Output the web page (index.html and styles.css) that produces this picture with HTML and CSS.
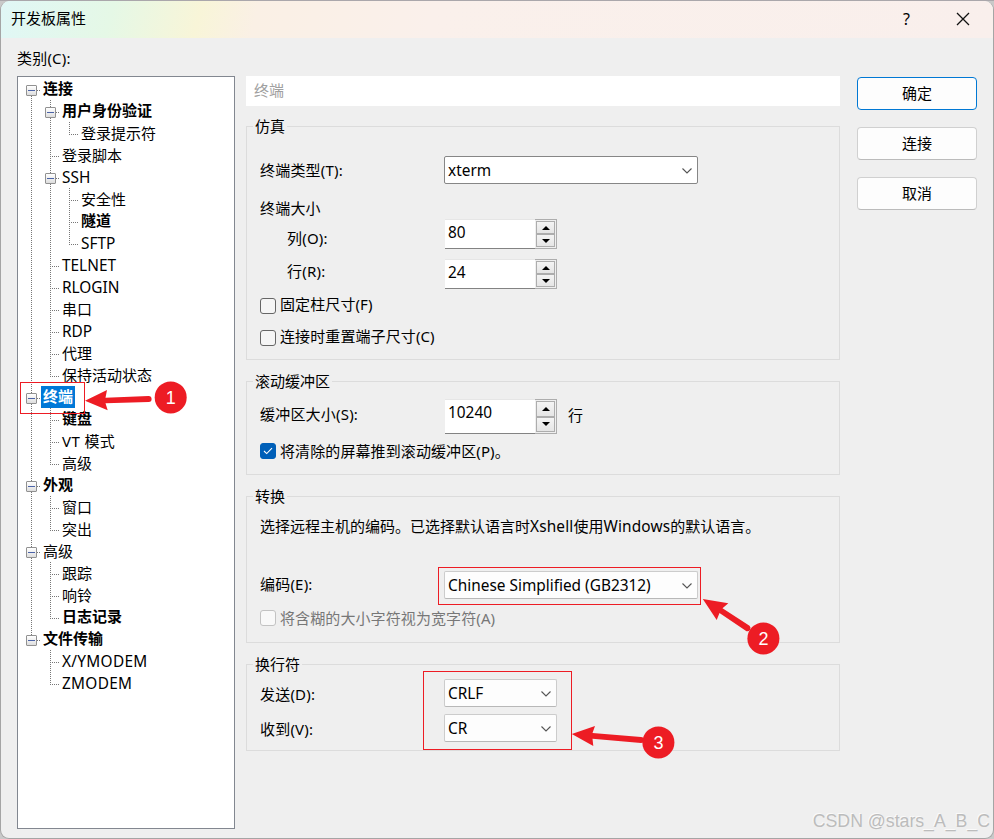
FILE: index.html
```
<!DOCTYPE html>
<html lang="zh-CN">
<head>
<meta charset="utf-8">
<title>开发板属性</title>
<link rel="stylesheet" href="styles.css">
</head>
<body>
<div class="window">
  <header class="titlebar">
    <h1>开发板属性</h1>
    <span class="help">?</span>
    <svg class="close" width="14" height="14" viewBox="0 0 14 14"><path d="M1 1L13 13M13 1L1 13"/></svg>
  </header>
  <div class="category">类别(C):</div>
  <div class="content">
    <nav class="tree">
      <ul>
        <li><i class="box"></i><b>连接</b>
          <ul>
            <li><i class="box"></i><b>用户身份验证</b>
              <ul><li><span>登录提示符</span></li></ul>
            </li>
            <li><span>登录脚本</span></li>
            <li><i class="box"></i><span class="lat">SSH</span>
              <ul>
                <li><span>安全性</span></li>
                <li><b>隧道</b></li>
                <li><span class="lat">SFTP</span></li>
              </ul>
            </li>
            <li><span class="lat">TELNET</span></li>
            <li><span class="lat">RLOGIN</span></li>
            <li><span>串口</span></li>
            <li><span class="lat">RDP</span></li>
            <li><span>代理</span></li>
            <li><span>保持活动状态</span></li>
          </ul>
        </li>
        <li><i class="box"></i><b class="selected">终端</b>
          <ul>
            <li><b>键盘</b></li>
            <li><span class="mixed">VT 模式</span></li>
            <li><span>高级</span></li>
          </ul>
        </li>
        <li><i class="box"></i><b>外观</b>
          <ul>
            <li><span>窗口</span></li>
            <li><span>突出</span></li>
          </ul>
        </li>
        <li><i class="box"></i><span>高级</span>
          <ul>
            <li><span>跟踪</span></li>
            <li><span>响铃</span></li>
            <li><b>日志记录</b></li>
          </ul>
        </li>
        <li><i class="box"></i><b>文件传输</b>
          <ul>
            <li><span class="lat modem">X/YMODEM</span></li>
            <li><span class="lat modem">ZMODEM</span></li>
          </ul>
        </li>
      </ul>
    </nav>

    <main class="panel">
      <div class="heading">终端</div>

      <section class="group emulation">
        <h2>仿真</h2>
        <div class="row type"><label>终端类型(T):</label>
          <div class="select strong wide"><span class="lat">xterm</span><svg class="chev" width="10" height="6" viewBox="0 0 10 6"><path d="M.5 .5L5 5L9.5 .5"/></svg></div></div>
        <div class="row size"><label>终端大小</label></div>
        <div class="row cols"><label class="indent">列(O):</label>
          <div class="spin"><span>80</span><div class="arrows"><i class="up"></i><i class="down"></i></div></div></div>
        <div class="row lines"><label class="indent">行(R):</label>
          <div class="spin"><span>24</span><div class="arrows"><i class="up"></i><i class="down"></i></div></div></div>
        <div class="check fixed"><i></i><span>固定柱尺寸(F)</span></div>
        <div class="check reset"><i></i><span>连接时重置端子尺寸(C)</span></div>
      </section>

      <section class="group buffer">
        <h2>滚动缓冲区</h2>
        <div class="row depth"><label>缓冲区大小(S):</label>
          <div class="spin tall"><span>10240</span><div class="arrows"><i class="up"></i><i class="down"></i></div></div><span class="unit">行</span></div>
        <div class="check on push"><i><svg width="10" height="8" viewBox="0 0 10 8"><path d="M1 4L3.7 6.6L9 1.2"/></svg></i><span>将清除的屏幕推到滚动缓冲区(P)。</span></div>
      </section>

      <section class="group convert">
        <h2>转换</h2>
        <p>选择远程主机的编码。已选择默认语言时<span class="lat wider">Xshell</span>使用<span class="lat wider">Windows</span>的默认语言。</p>
        <div class="row encoding"><label>编码(E):</label>
          <div class="select wide"><span class="lat">Chinese Simplified (GB2312)</span><svg class="chev" width="10" height="6" viewBox="0 0 10 6"><path d="M.5 .5L5 5L9.5 .5"/></svg></div></div>
        <div class="check off"><i></i><span>将含糊的大小字符视为宽字符(A)</span></div>
      </section>

      <section class="group newline">
        <h2>换行符</h2>
        <div class="row send"><label>发送(D):</label>
          <div class="select"><span class="lat">CRLF</span><svg class="chev" width="10" height="6" viewBox="0 0 10 6"><path d="M.5 .5L5 5L9.5 .5"/></svg></div></div>
        <div class="row receive"><label>收到(V):</label>
          <div class="select"><span class="lat">CR</span><svg class="chev" width="10" height="6" viewBox="0 0 10 6"><path d="M.5 .5L5 5L9.5 .5"/></svg></div></div>
      </section>
    </main>

    <aside class="actions">
      <button class="primary">确定</button>
      <button>连接</button>
      <button>取消</button>
    </aside>
  </div>
</div>

<svg class="notes" width="994" height="839" viewBox="0 0 994 839">
  <g class="frames">
    <rect x="20.5" y="382.5" width="64" height="31"/>
    <rect x="438.5" y="567.5" width="262" height="37"/>
    <rect x="423.5" y="671.5" width="148" height="78"/>
  </g>
  <g class="heads">
    <path d="M85 400.8L107 390L105.5 397.7L148.5 396A3 3 0 0 1 148.700 402L105.500 403.300L107.700 410.300Z"/>
    <path d="M702.800 599L728.300 603.300L722.500 608.300L749.500 625.800A3.200 3.200 0 0 1 746.500 631.200L719.500 613L716.700 620Z"/>
    <path d="M571.800 734L595 726L592.500 733L641 737A3 3 0 0 1 641 743L592.500 738.800L593.300 746Z"/>
    <circle cx="170.700" cy="397.400" r="16"/>
    <circle cx="763.400" cy="638.400" r="16"/>
    <circle cx="658.400" cy="742.400" r="16"/>
  </g>
  <g class="nums">
    <text x="170.700" y="404">1</text>
    <text x="763.400" y="645">2</text>
    <text x="658.400" y="749">3</text>
  </g>
</svg>
<div class="watermark">CSDN @stars_A_B_C</div>
</body>
</html>
```
FILE: styles.css
```
* { box-sizing: border-box; }

body {
  margin: 0;
  width: 994px;
  height: 839px;
  overflow: hidden;
  background: linear-gradient(#aaa7ab, #aaa7ab 1px, #c9c9c9 1px);
  color: #000;
  font: 15px/22px "Noto Sans", "Noto Sans CJK SC", sans-serif;
}

ul, h1, h2, p { margin: 0; padding: 0; list-style: none; font-size: 15px; font-weight: 400; }

.window {
  height: 838px;
  margin-top: 1px;
  overflow: hidden;
  background: #efefef;
  border: 1px solid #a5a5a5;
  border-top: 0;
  border-radius: 9px;
}

.titlebar {
  display: flex;
  align-items: center;
  height: 37px;
  padding: 0 23px 2px 10px;
  background: linear-gradient(105deg, #e0f7f6 0, #e5f8e6 110px, #f8f5d8 195px, #faf0e5 250px, #faf0eb 420px, #f9efec);
}
.titlebar h1 { flex: 1; line-height: 32px; padding-bottom: 2px; }
.help { margin-right: 46px; font-size: 16px; }
.close { stroke: #111; stroke-width: 1.3; fill: none; }

.category { height: 38px; padding: 9px 0 0 16px; letter-spacing: .2px; }

.content { display: flex; align-items: flex-start; padding-left: 16px; }

.lat { font-size: 15.4px; }
.wider { letter-spacing: .15px; }

.tree {
  width: 218px;
  height: 753px;
  padding: 1px 0 0 6px;
  background: #fff;
  border: 1px solid #828790;
}
.tree li { position: relative; padding-left: 19px; }
.tree li::before {
  content: "";
  position: absolute;
  left: 7px;
  top: 0;
  bottom: 0;
  width: 1px;
  background: repeating-linear-gradient(#777 0 1px, #fff 1px 2px);
}
.tree > ul > li:first-child::before { top: 12px; }
.tree li:last-child::before { bottom: auto; height: 13px; }
.tree li::after {
  content: "";
  position: absolute;
  left: 7px;
  top: 12px;
  width: 10px;
  height: 1px;
  background: repeating-linear-gradient(90deg, #777 0 1px, #fff 1px 2px);
}
.tree span, .tree b { display: block; width: max-content; height: 22px; line-height: 22px; white-space: nowrap; }
.tree b { line-height: 21px; }
.tree .lat { line-height: 24px; }
.tree .mixed { letter-spacing: .4px; }
.tree .modem { letter-spacing: .3px; }
.tree .selected { margin-left: -2px; padding: 0 2px; background: #0078d7; color: #fff; }
.box {
  position: absolute;
  z-index: 1;
  left: 2px;
  top: 7px;
  width: 11px;
  height: 11px;
  border: 1px solid #919191;
  border-radius: 1px;
  background: linear-gradient(#4b63a7, #4b63a7) 1px 4px / 7px 1px no-repeat, linear-gradient(#fff, #dedede);
}

.panel { width: 594px; margin-left: 11px; }
.heading { height: 30px; padding: 3px 8px; background: #fff; color: #a0a0a0; }

.group { padding-left: 13px; border: 1px solid #dcdcdc; }
.group h2 { width: max-content; height: 22px; margin: -11px 0 0 -7px; padding: 0 2px; line-height: 20px; background: #efefef; }
.emulation { height: 234px; margin-top: 20px; }
.buffer { height: 94px; margin-top: 21px; }
.convert { height: 147px; margin-top: 21px; }
.newline { height: 87px; margin-top: 21px; }

.row { display: flex; align-items: center; }
.row label { width: 184px; letter-spacing: .2px; }
.row .indent { padding-left: 27px; }
.type { margin-top: 18px; }
.size { height: 20px; margin-top: 14px; }
.cols { margin-top: 1px; }
.cols label { padding-top: 8px; }
.lines { margin-top: 10px; }
.lines label { padding-bottom: 6px; }
.fixed { margin-top: 7px; }
.reset { margin-top: 12px; }
.depth { margin-top: 6px; }
.depth label { padding-bottom: 5px; }
.push { margin-top: 7px; }
.convert p { height: 20px; margin-top: 9px; line-height: 18px; }
.encoding { margin-top: 34px; }
.encoding label { padding-bottom: 2px; }
.off { margin-top: 9px; color: #777; }
.send { margin-top: 3px; }
.receive { margin-top: 7px; }
.newline label { padding-top: 2px; }

.select {
  display: flex;
  align-items: center;
  justify-content: space-between;
  width: 113px;
  height: 28px;
  padding: 0 5px 1px 3px;
  background: #fdfdfd;
  border: 1px solid #ccc;
  border-bottom-color: #b8b8b8;
  border-radius: 2px;
}
.select .lat { padding-top: 2px; }
.wide { width: 254px; }
.strong { background: #fff; border-color: #868686; }
.chev { fill: none; stroke: #555; stroke-width: 1.1; transform: translateY(1px); }

.spin { display: flex; width: 112px; height: 30px; margin-left: 1px; }
.spin span { flex: 1; padding-left: 3px; font-size: 15.4px; line-height: 26px; background: #fff; border-top: 1px solid #e6e6e6; border-bottom: 1px solid #838383; }
.tall { height: 35px; }
.arrows {
  display: flex;
  flex-direction: column;
  width: 22px;
  padding: 1px;
  border: 1px solid #adadad;
  border-left-width: 0;
}
.arrows i { display: grid; place-items: center; flex: 1; border: 1px solid #adadad; background: linear-gradient(#f4f4f4, #e5e5e5); }
.arrows i::before { content: ""; border: 4px solid transparent; }
.arrows .up::before { border-top: 0; border-bottom-color: #000; }
.arrows .down::before { border-bottom: 0; border-top-color: #000; }
.unit { margin-left: 11px; padding-bottom: 3px; }

.check { display: flex; align-items: center; gap: 4px; height: 20px; letter-spacing: .1px; }
.check span { padding-bottom: 4px; }
.push span, .off span { padding-bottom: 1px; }
.check i { display: grid; place-items: center; width: 16px; height: 16px; border: 1px solid #666; border-radius: 3px; background: #f5f5f5; }
.on i { background: #005fb8; border-color: #005fb8; }
.on path { fill: none; stroke: #fff; stroke-width: 1.1; }
.off i { border-color: #c3c3c3; background: #f9f9f9; }

.actions { display: flex; flex-direction: column; gap: 17px; margin: 1px 0 0 17px; }
.actions button {
  width: 120px;
  height: 33px;
  padding: 0 0 2px;
  background: #fdfdfd;
  border: 1px solid #d0d0d0;
  border-bottom-color: #bbb;
  border-radius: 4px;
  color: #000;
  font: inherit;
}
.actions .primary { border-color: #0078d4; }

.notes { position: absolute; left: 0; top: 0; }
.frames { fill: none; stroke: #ed1c24; }
.heads { fill: #ed1c24; }
.nums { fill: #fff; font: 18px "Liberation Sans", sans-serif; text-anchor: middle; }

.watermark {
  position: absolute;
  right: 4px;
  bottom: 7px;
  color: #bcbcbc;
  font: 17.7px/22px "Liberation Sans", sans-serif;
  text-shadow: -1px -1px 0 #fafafa;
}
```
